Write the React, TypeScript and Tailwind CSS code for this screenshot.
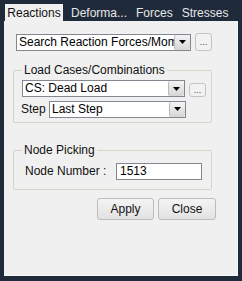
import React from "react";

const font = { fontFamily: '"Liberation Sans", Arial, sans-serif' };

function Arrow() {
  return (
    <div className="flex h-full w-[16px] items-center justify-center rounded-[2px] border-l border-[#b8b8b8] bg-gradient-to-b from-[#f4f4f4] to-[#d6d6d6]">
      <svg width="7" height="4" viewBox="0 0 7 4">
        <path d="M0 0h7L3.5 4z" fill="#000" />
      </svg>
    </div>
  );
}

function Combo({ text, className }: { text: string; className: string }) {
  return (
    <div className={`flex items-stretch border border-[#828790] bg-white ${className}`}>
      <div className="flex-1 overflow-hidden whitespace-nowrap pl-[2px] text-[12px] leading-[15px] text-black">
        {text}
      </div>
      <Arrow />
    </div>
  );
}

function Dots({ className }: { className: string }) {
  return (
    <div
      className={`flex shrink-0 items-center justify-center rounded-[3px] border border-[#c4c4c4] bg-[#f2f2f2] text-[9px] leading-none text-[#444] ${className}`}
    >
      ...
    </div>
  );
}

export default function App() {
  return (
    <div className="flex h-[281px] w-[242px] flex-col bg-[#1f2b3a] px-[4px] pb-[5px]" style={font}>
      {/* tabs */}
      <div className="flex h-[21px] items-end pl-[1px] text-[12px] text-[#e8e8e8]">
        <div className="flex h-[17px] w-[58px] items-center justify-center bg-[#f0f0f0] text-[#111]">
          Reactions
        </div>
        <div className="flex h-[17px] items-center pl-[8px] whitespace-nowrap">Deforma...</div>
        <div className="flex h-[17px] items-center pl-[9px]">Forces</div>
        <div className="flex h-[17px] items-center pl-[9px]">Stresses</div>
      </div>

      {/* panel */}
      <div className="flex flex-1 flex-col border-r border-b border-[#ffffff80] bg-[#f0f0f0] pl-[12px] pt-[12px]">
        <div className="flex items-center gap-[4px]">
          <Combo text="Search Reaction Forces/Moments" className="h-[17px] w-[175px]" />
          <Dots className="h-[18px] w-[17px]" />
        </div>

        <fieldset className="mt-[12px] ml-[-3px] w-[199px] rounded-[2px] border border-[#d5d5c5] pb-[4px]">
          <legend className="ml-[8px] px-[2px] text-[12px] leading-[14px] text-[#111]">
            Load Cases/Combinations
          </legend>
          <div className="mt-[3px] flex items-center gap-[4px] pl-[8px]">
            <Combo text="CS: Dead Load" className="h-[17px] w-[163px]" />
            <Dots className="mt-[3px] h-[14px] w-[17px]" />
          </div>
          <div className="mt-[3px] flex items-center gap-[3px] pl-[7px]">
            <span className="w-[25px] text-[12px] text-[#111]">Step</span>
            <Combo text="Last Step" className="h-[17px] w-[137px]" />
          </div>
        </fieldset>

        <fieldset className="mt-[20px] ml-[-3px] w-[199px] rounded-[2px] border border-[#d5d5c5] pb-[9px]">
          <legend className="ml-[8px] px-[2px] text-[12px] leading-[14px] text-[#111]">
            Node Picking
          </legend>
          <div className="mt-[5px] flex items-center pl-[11px]">
            <span className="w-[91px] text-[12px] text-[#111]">Node Number :</span>
            <div className="flex h-[17px] w-[86px] items-center border border-[#828790] bg-white pl-[3px] text-[12px] text-black">
              1513
            </div>
          </div>
        </fieldset>

        <div className="mt-[8px] flex justify-end gap-[4px] pr-[21px]">
          <button className="h-[22px] w-[57px] rounded-[3px] border border-[#bcbcbc] bg-gradient-to-b from-[#f4f4f4] to-[#e2e2e2] text-[12px] text-[#111]">
            Apply
          </button>
          <button className="h-[22px] w-[58px] rounded-[3px] border border-[#bcbcbc] bg-gradient-to-b from-[#f4f4f4] to-[#e2e2e2] text-[12px] text-[#111]">
            Close
          </button>
        </div>
      </div>
    </div>
  );
}
